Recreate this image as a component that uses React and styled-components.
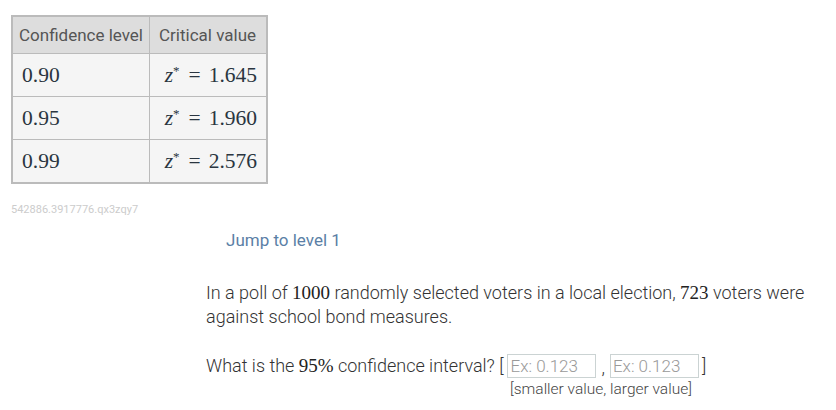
import React from 'react';
import styled, { createGlobalStyle } from 'styled-components';

const GlobalStyle = createGlobalStyle`
  body {
    margin: 0;
    background: #fff;
    font-family: Roboto, "Liberation Sans", sans-serif;
    color: #333;
  }
`;

const Page = styled.div`
  padding: 15px 0 0 11px;
`;

const Table = styled.table`
  border-collapse: collapse;
  border: 2px solid #bbb;
`;

const HeadCell = styled.th`
  background: #ddd;
  border: 1px solid #bbb;
  font-weight: 400;
  font-size: 17px;
  color: #555;
  text-align: left;
  padding: 0 ${p => (p.$wide ? '10px' : '6px')} 0 ${p => (p.$wide ? '9px' : '6px')};
  height: 36px;
`;

const Cell = styled.td`
  background: #f5f5f5;
  border: 1px solid #bbb;
  font-family: "Liberation Serif", "DejaVu Serif", serif;
  font-size: 21.5px;
  color: #2a3540;
  padding: 0 9px 0 ${p => (p.$math ? '10px' : '9px')};
  height: 42px;
  text-align: ${p => (p.$math ? 'right' : 'left')};
`;

const Star = styled.i`
  font-style: italic;
`;

const Sup = styled.sup`
  font-size: 13px;
  vertical-align: 7px;
  line-height: 0;
`;

const Eq = styled.span`
  margin: 0 8px 0 9px;
`;

const Hash = styled.div`
  font-size: 11px;
  color: #ccc;
  margin-top: 19px;
`;

const Jump = styled.a`
  display: block;
  margin: 14px 0 0 215px;
  font-size: 17px;
  color: #5b7fa6;
  text-decoration: none;
`;

const Question = styled.div`
  margin: 31px 0 0 195px;
  width: 606px;
  font-size: 18px;
  font-weight: 300;
  line-height: 24px;
  color: #333;
`;

const MathNum = styled.span`
  font-family: "Liberation Serif", "DejaVu Serif", serif;
  font-weight: 400;
  font-size: 19px;
  line-height: 0;
  color: #222;
`;

const Prompt = styled.div`
  margin-top: 25px;
  display: flex;
  align-items: center;
`;

const Input = styled.input`
  width: 89px;
  height: 24px;
  box-sizing: border-box;
  border: 1px solid #cbd3d3;
  font-family: Roboto, sans-serif;
  font-weight: 300;
  font-size: 17px;
  padding: 0 2px;
  margin: 0 3px 0 ${p => (p.$first ? '4px' : '3px')};
  &::placeholder {
    color: #999;
  }
`;

const Comma = styled.span`
  align-self: flex-end;
  line-height: 20px;
  margin: 0 2px;
`;

const Hint = styled.div`
  margin: 1px 0 0 304px;
  font-size: 15.5px;
  font-weight: 300;
  line-height: 20px;
  color: #444;
`;

const rows = [
  ['0.90', '1.645'],
  ['0.95', '1.960'],
  ['0.99', '2.576'],
];

export default function App() {
  return (
    <>
      <GlobalStyle />
      <Page>
        <Table>
          <thead>
            <tr>
              <HeadCell>Confidence level</HeadCell>
              <HeadCell $wide>Critical value</HeadCell>
            </tr>
          </thead>
          <tbody>
            {rows.map(([c, z]) => (
              <tr key={c}>
                <Cell>{c}</Cell>
                <Cell $math>
                  <Star>z</Star>
                  <Sup>*</Sup>
                  <Eq>=</Eq>
                  {z}
                </Cell>
              </tr>
            ))}
          </tbody>
        </Table>
        <Hash>542886.3917776.qx3zqy7</Hash>
        <Jump href="#">Jump to level 1</Jump>
        <Question>
          In a poll of <MathNum>1000</MathNum> randomly selected voters in a local election, <MathNum>723</MathNum> voters were against school bond measures.
          <Prompt>
            What is the&nbsp;<MathNum>95%</MathNum>&nbsp;confidence interval? [
            <Input $first placeholder="Ex: 0.123" />
            <Comma>,</Comma>
            <Input placeholder="Ex: 0.123" />
            ]
          </Prompt>
          <Hint>[smaller value, larger value]</Hint>
        </Question>
      </Page>
    </>
  );
}
